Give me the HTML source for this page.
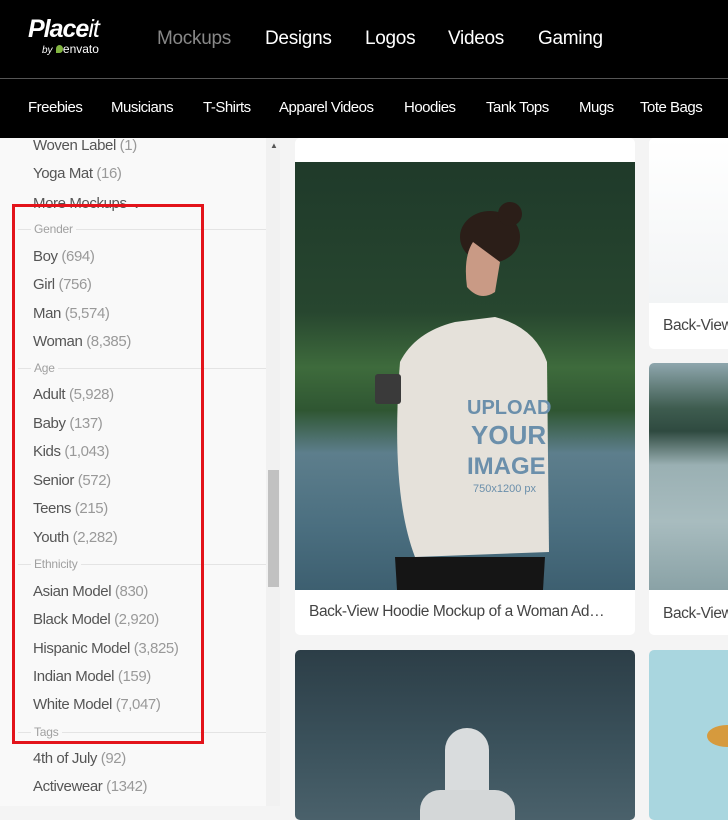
<!DOCTYPE html>
<html><head><meta charset="utf-8"><style>
*{margin:0;padding:0;box-sizing:border-box}
body{width:728px;height:806px;overflow:hidden;background:#f4f4f4;font-family:"Liberation Sans",sans-serif;position:relative}
.a{position:absolute;white-space:nowrap}
.top{left:0;top:0;width:728px;height:78px;background:#000}
.sep{left:0;top:78px;width:728px;height:1px;background:#555}
.nav2{left:0;top:79px;width:728px;height:59px;background:#000}
.m{color:#fff;font-size:19px;top:28px;letter-spacing:-0.3px}
.s{color:#fff;font-size:15px;top:99px;letter-spacing:-0.5px}
.side{left:0;top:138px;width:266px;height:668px;background:#f9f9f9}
.it{left:33px;font-size:15px;color:#555;letter-spacing:-0.4px}
.it span{color:#999}
.lab{left:31px;font-size:12px;color:#a0a0a0;letter-spacing:-0.2px}
.ln{height:1px;background:#e4e4e4}
.card{background:#fff;border-radius:5px;overflow:hidden}
.cap{font-size:15.5px;color:#444;letter-spacing:-0.4px}
</style></head><body>
<div class="a top"></div><div class="a sep"></div><div class="a nav2"></div>
<div class="a" style="left:28px;top:15px;color:#fff;font-size:25px;font-weight:bold;font-style:italic;letter-spacing:-1px">Place<span style="font-weight:normal">it</span></div>
<div class="a" style="left:42px;top:42px;color:#fff;font-size:12px"><i style="font-size:10px">by</i> <span style="display:inline-block;width:7px;height:8px;background:#82b541;border-radius:50% 50% 50% 0"></span>envato</div>
<div class="a m" style="left:157px;color:#888">Mockups</div>
<div class="a m" style="left:265px">Designs</div>
<div class="a m" style="left:365px">Logos</div>
<div class="a m" style="left:448px">Videos</div>
<div class="a m" style="left:538px">Gaming</div>
<div class="a s" style="left:28px">Freebies</div>
<div class="a s" style="left:111px">Musicians</div>
<div class="a s" style="left:203px">T-Shirts</div>
<div class="a s" style="left:279px">Apparel Videos</div>
<div class="a s" style="left:404px">Hoodies</div>
<div class="a s" style="left:486px">Tank Tops</div>
<div class="a s" style="left:579px">Mugs</div>
<div class="a s" style="left:640px">Tote Bags</div>

<div class="a side"></div>
<div class="a" style="left:266px;top:138px;width:14px;height:668px;background:#f1f1f1"></div>
<div class="a" style="left:268px;top:470px;width:11px;height:117px;background:#c1c1c1"></div>
<div class="a" style="left:270px;top:141px;font-size:8px;color:#555">▲</div>

<div class="a it" style="top:137px">Woven Label <span>(1)</span></div>
<div class="a it" style="top:165px">Yoga Mat <span>(16)</span></div>
<div class="a it" style="top:194px">More Mockups ⌄</div>
<div class="a ln" style="left:18px;top:229px;width:248px"></div>
<div class="a lab" style="top:222px;background:#f9f9f9;padding:0 3px">Gender</div>
<div class="a it" style="top:248px">Boy <span>(694)</span></div>
<div class="a it" style="top:276px">Girl <span>(756)</span></div>
<div class="a it" style="top:305px">Man <span>(5,574)</span></div>
<div class="a it" style="top:333px">Woman <span>(8,385)</span></div>
<div class="a ln" style="left:18px;top:368px;width:248px"></div>
<div class="a lab" style="top:361px;background:#f9f9f9;padding:0 3px">Age</div>
<div class="a it" style="top:386px">Adult <span>(5,928)</span></div>
<div class="a it" style="top:415px">Baby <span>(137)</span></div>
<div class="a it" style="top:443px">Kids <span>(1,043)</span></div>
<div class="a it" style="top:472px">Senior <span>(572)</span></div>
<div class="a it" style="top:500px">Teens <span>(215)</span></div>
<div class="a it" style="top:529px">Youth <span>(2,282)</span></div>
<div class="a ln" style="left:18px;top:564px;width:248px"></div>
<div class="a lab" style="top:557px;background:#f9f9f9;padding:0 3px">Ethnicity</div>
<div class="a it" style="top:583px">Asian Model <span>(830)</span></div>
<div class="a it" style="top:611px">Black Model <span>(2,920)</span></div>
<div class="a it" style="top:640px">Hispanic Model <span>(3,825)</span></div>
<div class="a it" style="top:668px">Indian Model <span>(159)</span></div>
<div class="a it" style="top:696px">White Model <span>(7,047)</span></div>
<div class="a ln" style="left:18px;top:732px;width:248px"></div>
<div class="a lab" style="top:725px;background:#f9f9f9;padding:0 3px">Tags</div>
<div class="a it" style="top:750px">4th of July <span>(92)</span></div>
<div class="a it" style="top:778px">Activewear <span>(1342)</span></div>
<div class="a" style="left:12px;top:204px;width:192px;height:540px;border:3px solid #e3141b"></div>

<div class="a card" style="left:295px;top:138px;width:340px;height:497px">
 <div class="a" style="left:0;top:24px;width:340px;height:428px;background:linear-gradient(180deg,#1f3a2a 0%,#27462f 35%,#3e6b3c 48%,#2f5632 58%,#5d7e8c 68%,#4b6f80 85%,#3d5f70 100%)"></div>
 <svg class="a" style="left:0;top:24px" width="340" height="428">
  <ellipse cx="195" cy="75" rx="30" ry="26" fill="#2b1e18"/>
  <ellipse cx="215" cy="52" rx="12" ry="12" fill="#2b1e18"/>
  <path d="M178 80 Q168 95 172 125 Q185 140 200 130 L205 100 Z" fill="#c99a85"/>
  <path d="M105 200 Q120 170 160 160 L200 155 Q240 165 252 200 L254 390 L120 395 Q95 330 105 200 Z" fill="#e5e1da"/>
  <path d="M100 395 L250 395 L248 428 L102 428 Z" fill="#151515"/>
  <rect x="80" y="212" width="26" height="30" rx="3" fill="#3a3a3a"/>
  <text x="172" y="252" font-family="Liberation Sans" font-weight="bold" font-size="20" fill="#6b8fab">UPLOAD</text>
  <text x="176" y="282" font-family="Liberation Sans" font-weight="bold" font-size="26" fill="#6b8fab">YOUR</text>
  <text x="172" y="312" font-family="Liberation Sans" font-weight="bold" font-size="24" fill="#6b8fab">IMAGE</text>
  <text x="178" y="330" font-family="Liberation Sans" font-size="11" fill="#6b8fab">750x1200 px</text>
 </svg>
 <div class="a cap" style="left:14px;top:465px">Back-View Hoodie Mockup of a Woman Ad…</div>
</div>
<div class="a card" style="left:649px;top:138px;width:90px;height:211px">
 <div class="a" style="left:0;top:0;width:90px;height:165px;background:linear-gradient(#fff,#f2f4f5)"></div>
 <div class="a cap" style="left:14px;top:179px">Back-View</div>
</div>
<div class="a card" style="left:649px;top:363px;width:90px;height:272px">
 <div class="a" style="left:0;top:0;width:90px;height:227px;background:linear-gradient(180deg,#8ea6ad 0%,#3e5c4f 20%,#2f4a40 30%,#9ab0b3 45%,#a8bcbf 70%,#8aa2a6 100%)"></div>
 <div class="a cap" style="left:14px;top:242px">Back-View</div>
</div>
<div class="a card" style="left:295px;top:650px;width:340px;height:170px;background:linear-gradient(180deg,#2c3e47,#3c535d 60%,#4a616b)">
 <div class="a" style="left:150px;top:78px;width:44px;height:90px;background:#d9dcdd;border-radius:22px 22px 0 0"></div>
 <div class="a" style="left:125px;top:140px;width:95px;height:40px;background:#d4d7d8;border-radius:20px 20px 0 0"></div>
</div>
<div class="a card" style="left:649px;top:650px;width:90px;height:170px;background:#a9d6df">
 <div class="a" style="left:58px;top:75px;width:40px;height:22px;background:#d69a3d;border-radius:50% 50% 0 50%"></div>
</div>
</body></html>
